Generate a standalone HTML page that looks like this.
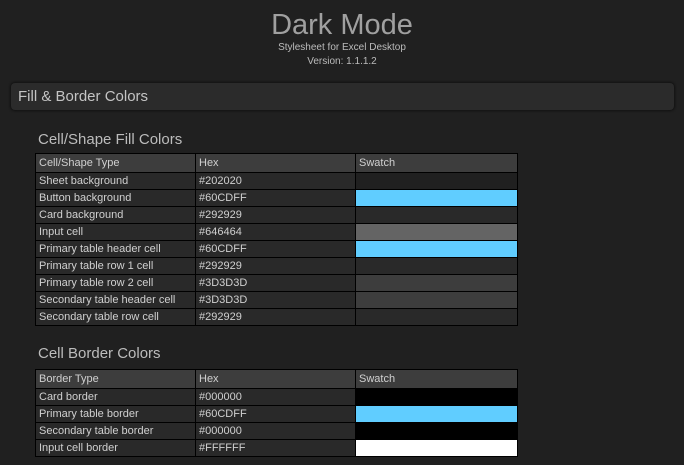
<!DOCTYPE html>
<html><head><style>
body{margin:0;width:684px;height:465px;background:#202020;font-family:"Liberation Sans",sans-serif;position:relative;overflow:hidden;color:#c8c8c8}
.t{position:absolute;left:0;width:684px;text-align:center}
.card{position:absolute;left:11px;top:83px;width:663px;height:27px;background:#2b2b2b;border-radius:4px;box-shadow:0 0 2px 1px #111}
.card span{position:absolute;left:7px;top:5px;font-size:15px;color:#c4c4c4}
h2{position:absolute;left:38px;margin:0;font-weight:normal;font-size:15px;color:#bcbcbc}
table{position:absolute;left:35px;border-collapse:collapse;font-size:11px;table-layout:fixed;width:482px}
td{border:1px solid #000;height:17px;padding:0 0 0 3px;background:#292929;color:#d0d0d0;box-sizing:border-box}
tr.h td{background:#3d3d3d;height:19px}
</style></head><body>
<div class="t" style="top:9px;font-size:29px;color:#a0a0a0">Dark Mode</div>
<div class="t" style="top:42px;font-size:10px;color:#bbb">Stylesheet for Excel Desktop</div>
<div class="t" style="top:56px;font-size:10px;color:#bbb">Version: 1.1.1.2</div>
<div class="card"><span>Fill &amp; Border Colors</span></div>
<h2 style="top:131px">Cell/Shape Fill Colors</h2>
<table style="top:153px">
<colgroup><col style="width:160px"><col style="width:160px"><col style="width:162px"></colgroup>
<tr class="h"><td>Cell/Shape Type</td><td>Hex</td><td>Swatch</td></tr>
<tr><td>Sheet background</td><td>#202020</td><td style="background:#202020"></td></tr>
<tr><td>Button background</td><td>#60CDFF</td><td style="background:#60cdff"></td></tr>
<tr><td>Card background</td><td>#292929</td><td style="background:#292929"></td></tr>
<tr><td>Input cell</td><td>#646464</td><td style="background:#646464"></td></tr>
<tr><td>Primary table header cell</td><td>#60CDFF</td><td style="background:#60cdff"></td></tr>
<tr><td>Primary table row 1 cell</td><td>#292929</td><td style="background:#292929"></td></tr>
<tr><td>Primary table row 2 cell</td><td>#3D3D3D</td><td style="background:#3d3d3d"></td></tr>
<tr><td>Secondary table header cell</td><td>#3D3D3D</td><td style="background:#3d3d3d"></td></tr>
<tr><td>Secondary table row cell</td><td>#292929</td><td style="background:#292929"></td></tr>
</table>
<h2 style="top:345px">Cell Border Colors</h2>
<table style="top:369px">
<colgroup><col style="width:160px"><col style="width:160px"><col style="width:162px"></colgroup>
<tr class="h"><td>Border Type</td><td>Hex</td><td>Swatch</td></tr>
<tr><td>Card border</td><td>#000000</td><td style="background:#000"></td></tr>
<tr><td>Primary table border</td><td>#60CDFF</td><td style="background:#60cdff"></td></tr>
<tr><td>Secondary table border</td><td>#000000</td><td style="background:#000"></td></tr>
<tr><td>Input cell border</td><td>#FFFFFF</td><td style="background:#fff"></td></tr>
</table>
</body></html>
